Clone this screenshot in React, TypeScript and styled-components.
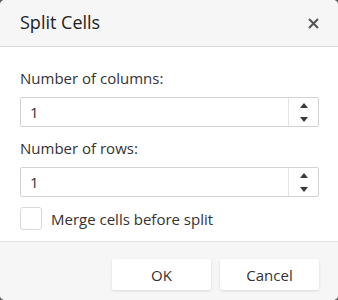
import React from "react";
import styled, { createGlobalStyle } from "styled-components";

const Global = createGlobalStyle`
  html, body { margin: 0; padding: 0; background: #5f5f5f; }
  body { font-family: "Open Sans", "Noto Sans", sans-serif; }
  * { box-sizing: border-box; }
`;

const Dialog = styled.div`
  width: 338px;
  height: 300px;
  background: #fff;
  border-radius: 5px;
  overflow: hidden;
  display: flex;
  flex-direction: column;
  color: #333;
`;

const Header = styled.div`
  height: 47px;
  flex: none;
  background: #f6f6f6;
  border-bottom: 1px solid #dcdcdc;
  display: flex;
  align-items: center;
  justify-content: space-between;
  padding: 0 18px 0 20px;
`;

const Title = styled.h1`
  margin: 0;
  font-size: 18px;
  font-weight: 400;
  color: #222;
  padding-bottom: 2px;
`;

const Close = styled.button`
  border: none;
  background: none;
  padding: 0;
  width: 14px;
  height: 14px;
  display: flex;
  align-items: center;
  justify-content: center;
  cursor: pointer;
`;

const Body = styled.div`
  flex: 1;
  padding: 21px 19px 0 20px;
  display: flex;
  flex-direction: column;
`;

const Label = styled.label`
  font-size: 15px;
  color: #333;
  line-height: 20px;
  margin-bottom: 9px;
`;

const Spin = styled.div<{ $last?: boolean }>`
  height: 30px;
  border: 1px solid #d3d3d3;
  border-radius: 2px;
  display: flex;
  margin-bottom: ${(p) => (p.$last ? "10px" : "11px")};
`;

const SpinInput = styled.input`
  flex: 1;
  border: none;
  outline: none;
  font: inherit;
  font-size: 15px;
  color: #333;
  padding: 0 9px;
  min-width: 0;
  background: transparent;
`;

const SpinButtons = styled.div`
  width: 30px;
  border-left: 1px solid #e3e3e3;
  display: flex;
  flex-direction: column;
  align-items: center;
  justify-content: center;
  gap: 9px;
`;

const Arrow = styled.span<{ $down?: boolean }>`
  width: 0;
  height: 0;
  border-left: 4.5px solid transparent;
  border-right: 4.5px solid transparent;
  ${(p) => (p.$down ? "border-top: 5px solid #3a3a3a;" : "border-bottom: 5px solid #3a3a3a;")}
`;

const CheckRow = styled.div`
  display: flex;
  align-items: center;
  gap: 9px;
`;

const Box = styled.span`
  width: 22px;
  height: 23px;
  border: 1px solid #d9d9d9;
  border-radius: 3px;
  background: #fff;
`;

const CheckLabel = styled.span`
  font-size: 15px;
  color: #333;
`;

const Footer = styled.div`
  height: 59px;
  flex: none;
  background: #f6f6f6;
  border-top: 1px solid #e3e3e3;
  display: flex;
  align-items: flex-start;
  justify-content: flex-end;
  gap: 9px;
  padding: 17px 19px 0;
`;

const Button = styled.button`
  width: 99px;
  height: 31px;
  border: none;
  border-radius: 2px;
  background: #fff;
  box-shadow: 0 1px 3px rgba(0, 0, 0, 0.12);
  font: inherit;
  font-size: 15px;
  color: #333;
`;

function Spinner({ last }: { last?: boolean }) {
  return (
    <Spin $last={last}>
      <SpinInput defaultValue="1" />
      <SpinButtons>
        <Arrow />
        <Arrow $down />
      </SpinButtons>
    </Spin>
  );
}

export default function App() {
  return (
    <>
      <Global />
      <Dialog>
        <Header>
          <Title>Split Cells</Title>
          <Close aria-label="Close">
            <svg width="11" height="11" viewBox="0 0 11 11">
              <path d="M1 1 L10 10 M10 1 L1 10" stroke="#555" strokeWidth="2" />
            </svg>
          </Close>
        </Header>
        <Body>
          <Label>Number of columns:</Label>
          <Spinner />
          <Label>Number of rows:</Label>
          <Spinner last />
          <CheckRow>
            <Box />
            <CheckLabel>Merge cells before split</CheckLabel>
          </CheckRow>
        </Body>
        <Footer>
          <Button>OK</Button>
          <Button>Cancel</Button>
        </Footer>
      </Dialog>
    </>
  );
}
